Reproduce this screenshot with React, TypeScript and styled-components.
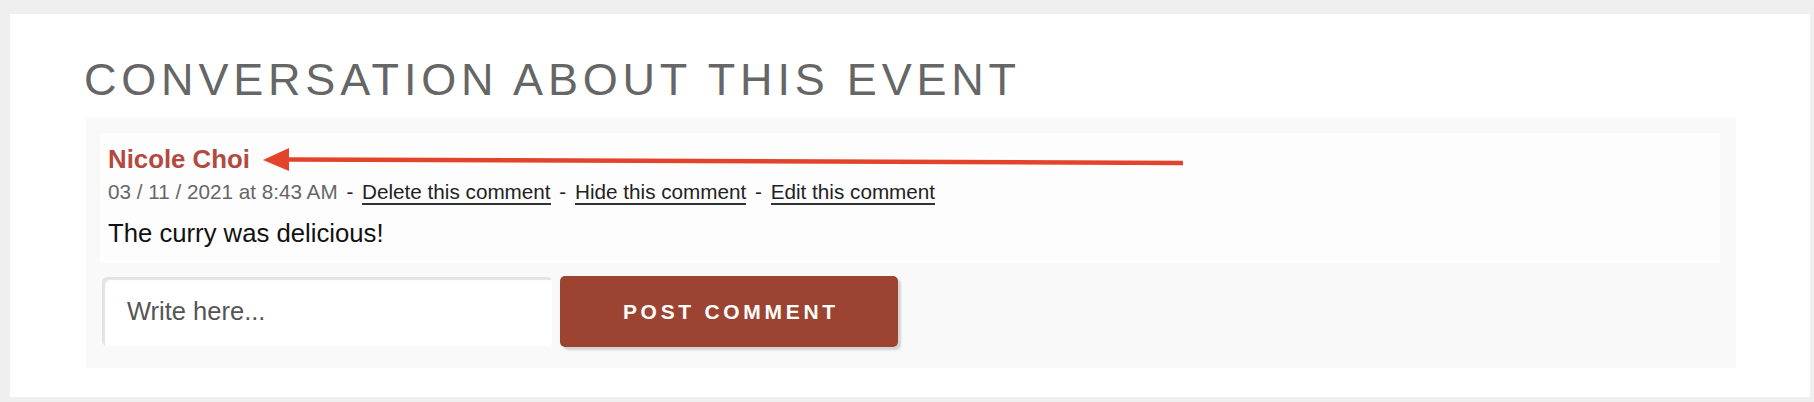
import React from 'react';
import styled, { createGlobalStyle } from 'styled-components';

const GlobalStyle = createGlobalStyle`
  html, body {
    margin: 0;
    padding: 0;
    background: #efefef;
    font-family: "Liberation Sans", Arial, sans-serif;
  }
`;

const Panel = styled.section`
  margin: 14px 4px 0 10px;
  background: #ffffff;
  padding: 40px 74px 29px 76px;
`;

const Title = styled.h2`
  margin: 0 0 12px -2px;
  font-size: 45px;
  line-height: 52px;
  font-weight: 400;
  letter-spacing: 4.8px;
  color: #666666;
  text-transform: uppercase;
`;

const Thread = styled.div`
  background: #f9f9f9;
  padding: 15px 16px 21px 14px;
`;

const Card = styled.article`
  position: relative;
  background: #fdfdfd;
  padding: 12px 8px 15px;
`;

const Author = styled.div`
  font-size: 25.8px;
  line-height: 29px;
  font-weight: 700;
  color: #b34a40;
`;

const Meta = styled.div`
  margin-top: 6px;
  font-size: 20.7px;
  line-height: 24px;
  color: #666666;
`;

const Sep = styled.span`
  color: #222222;
  margin: 0 3px;
`;

const MetaLink = styled.a`
  color: #222222;
  text-decoration: none;
  border-bottom: 2px solid #333333;
  cursor: pointer;
`;

const Body = styled.p`
  margin: 15px 0 0;
  font-size: 25.7px;
  line-height: 29px;
  color: #111111;
`;

const Pointer = styled.svg`
  position: absolute;
  left: 0;
  top: 0;
  overflow: visible;
  pointer-events: none;
`;

const Form = styled.form`
  display: flex;
  align-items: center;
  gap: 8px;
  margin: 13px 0 0 2px;
`;

const Field = styled.input`
  box-sizing: border-box;
  width: 450px;
  height: 69px;
  border: none;
  border-radius: 5px;
  background: #ffffff;
  box-shadow: inset 3px 3px 1px #e3e3e3;
  padding: 0 20px 0 25px;
  font-family: "Liberation Sans", Arial, sans-serif;
  font-size: 25.5px;
  color: #333333;
  outline: none;

  &::placeholder {
    color: #555555;
  }
`;

const PostButton = styled.button`
  box-sizing: border-box;
  width: 338px;
  height: 71px;
  border: none;
  border-radius: 5px;
  background: #9c4331;
  box-shadow: 3px 3px 2px rgba(0, 0, 0, 0.15);
  color: #ffffff;
  font-family: "Liberation Sans", Arial, sans-serif;
  font-size: 21px;
  font-weight: 700;
  letter-spacing: 3.7px;
  text-transform: uppercase;
  padding: 0 0 0 3.7px;
  cursor: pointer;
`;

const actions = ['Delete this comment', 'Hide this comment', 'Edit this comment'];

export default function App() {
  return (
    <>
      <GlobalStyle />
      <Panel>
        <Title>Conversation about this event</Title>
        <Thread>
          <Card>
            <Author>Nicole Choi</Author>
            <Meta>
              03 / 11 / 2021 at 8:43 AM
              {actions.map((label) => (
                <React.Fragment key={label}>
                  <Sep> - </Sep>
                  <MetaLink>{label}</MetaLink>
                </React.Fragment>
              ))}
            </Meta>
            <Body>The curry was delicious!</Body>
            <Pointer width="1100" height="60" viewBox="0 0 1100 60">
              <line x1="186" y1="26.5" x2="1083" y2="30" stroke="#e4432b" strokeWidth="4.5" />
              <polygon points="163,27 189,15 189,38" fill="#e4432b" />
            </Pointer>
          </Card>
          <Form onSubmit={(e) => e.preventDefault()}>
            <Field placeholder="Write here..." />
            <PostButton type="submit">Post comment</PostButton>
          </Form>
        </Thread>
      </Panel>
    </>
  );
}
